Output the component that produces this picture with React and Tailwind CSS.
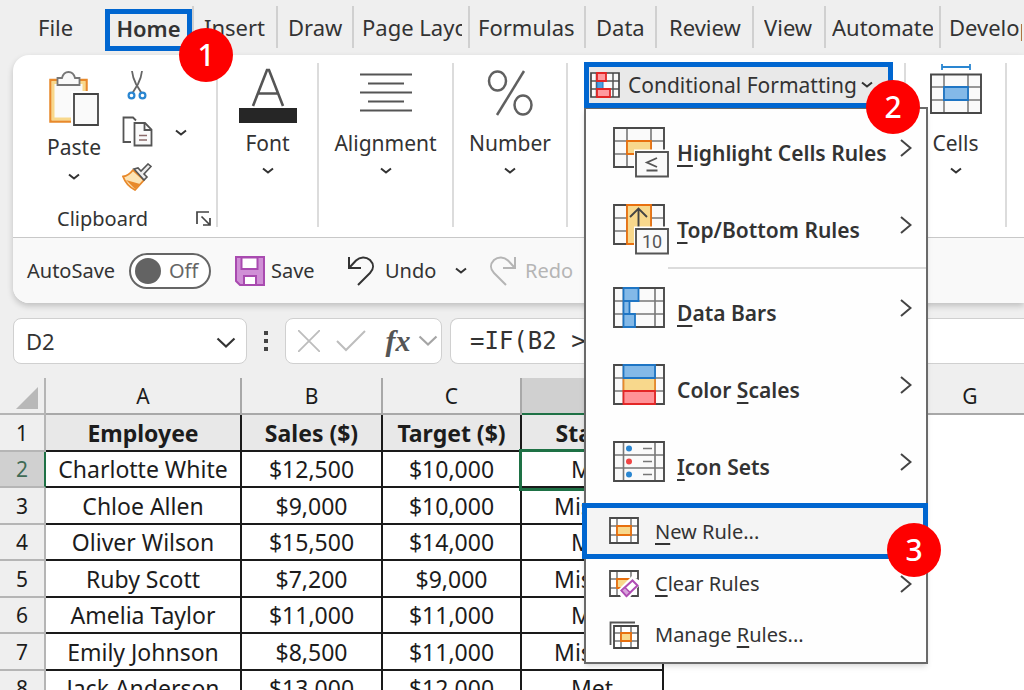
import { useState } from 'react';
import clsx from 'clsx';

const TABS = [
  { name: 'Insert', width: 'w-[84px]', pad: 'pl-2.5' },
  { name: 'Draw', width: 'w-[76px]', pad: 'pl-2.5' },
  { name: 'Page Layout', width: 'w-[116px]', pad: 'pl-2' },
  { name: 'Formulas', width: 'w-[116px]', pad: 'pl-2' },
  { name: 'Data', width: 'w-[71px]', pad: 'pl-2.5' },
  { name: 'Review', width: 'w-[97px]', pad: 'pl-3' },
  { name: 'View', width: 'w-[72px]', pad: 'pl-2.5' },
  { name: 'Automate', width: 'w-[115px]', pad: 'pl-1.5' },
  { name: 'Developer', width: 'w-[89px]', pad: 'pl-2' },
];

const COLUMNS = ['A', 'B', 'C', 'D', 'E', 'F', 'G'];

const ROWS = [
  ['Charlotte White', '$12,500', '$10,000', 'Met'],
  ['Chloe Allen', '$9,000', '$10,000', 'Missed'],
  ['Oliver Wilson', '$15,500', '$14,000', 'Met'],
  ['Ruby Scott', '$7,200', '$9,000', 'Missed'],
  ['Amelia Taylor', '$11,000', '$11,000', 'Met'],
  ['Emily Johnson', '$8,500', '$11,000', 'Missed'],
  ['Jack Anderson', '$13,000', '$12,000', 'Met'],
];

function SmallChevron({ className }) {
  return (
    <svg viewBox="0 0 12 8" className={clsx('w-3 h-2 shrink-0', className)} fill="none" stroke="currentColor" strokeWidth="2">
      <path d="M1 1.5L6 5.5L11 1.5" />
    </svg>
  );
}

function WideChevron({ className }) {
  return (
    <svg viewBox="0 0 20 12" className={clsx('w-5 h-3 shrink-0', className)} fill="none" stroke="currentColor" strokeWidth="2.2">
      <path d="M1.5 1.5L10 9.5L18.5 1.5" />
    </svg>
  );
}

function RightChevron() {
  return (
    <svg viewBox="0 0 12 18" className="w-3 h-[18px] shrink-0" fill="none" stroke="#444" strokeWidth="2">
      <path d="M1 1L10.5 9L1 17" />
    </svg>
  );
}

function Badge({ children, className }) {
  return (
    <span className={clsx('absolute z-30 flex items-center justify-center size-[54px] rounded-full bg-[#fe0000] text-white text-[30px] leading-none font-medium', className)}>
      {children}
    </span>
  );
}

/* Ribbon icons */

function PasteIcon() {
  return (
    <svg viewBox="0 0 50 56" className="w-[50px] h-14" fill="none">
      <path d="M37.5 20V9H1.500V50.500H24" stroke="#e8892b" strokeWidth="2.500" fill="#fafafa" />
      <path d="M35 20V11.500H4V48H24" stroke="#f8d88c" strokeWidth="3" />
      <path d="M8.500 14V7H13C14 3 16 1 19.500 1C23 1 25 3 26 7H30.500V14Z" fill="#fafafa" stroke="#777" strokeWidth="1.800" />
      <path d="M22 20H50V56H22Z" fill="#fff" />
      <path d="M25 23H49V54H25Z" fill="#fafafa" stroke="#444" strokeWidth="1.800" />
    </svg>
  );
}

function CutIcon() {
  return (
    <svg viewBox="0 0 20 30" className="w-5 h-[30px]" fill="none">
      <path d="M5 1C5.500 6 7 10 9 14L14.500 23M15 1C14.500 6 13 10 11 14L5.500 23" stroke="#666" strokeWidth="1.800" />
      <circle cx="4.500" cy="25.500" r="2.900" stroke="#2a86d1" strokeWidth="2.200" />
      <circle cx="15.500" cy="25.500" r="2.900" stroke="#2a86d1" strokeWidth="2.200" />
    </svg>
  );
}

function CopyIcon() {
  return (
    <svg viewBox="0 0 31 31" className="size-[31px]" fill="none" stroke="#555" strokeWidth="1.800">
      <path d="M9 26H1.500V1.500H11L14 4.500" />
      <path d="M12.500 7H23L29.500 13.500V29.500H12.500Z" fill="#fafafa" />
      <path d="M22.500 7V14H29.500" />
      <path d="M17 19.500H25M17 24H25" stroke="#8b6b6b" strokeWidth="1.400" />
    </svg>
  );
}

function BrushIcon() {
  return (
    <svg viewBox="0 0 30 28" className="w-[30px] h-7" fill="none">
      <path d="M11 7C8 11 5 13 1 13.500C3 19 7 24 13 27L22 17Z" fill="#fce3b4" stroke="#e8892b" strokeWidth="1.800" />
      <path d="M4 17L18 21L13 26Z" fill="#e8892b" />
      <path d="M12 6L16 5L19 8L26 1L29 3.500L22 11L25 14L22 17Z" fill="#eee" stroke="#555" strokeWidth="1.600" />
    </svg>
  );
}

function LauncherIcon() {
  return (
    <svg viewBox="0 0 16 16" className="size-4" fill="none" stroke="#444" strokeWidth="1.700">
      <path d="M1 13V1H13" />
      <path d="M5.500 5.500L13.500 13.500M14 7V14H7" />
    </svg>
  );
}

function FontIcon() {
  return (
    <svg viewBox="0 0 60 56" className="w-[60px] h-14" fill="none">
      <path d="M15 39L29 3H31L45 39M20.500 26.500H39.500" stroke="#555" strokeWidth="2.600" />
      <rect x="1" y="41" width="58" height="15" fill="#262626" />
    </svg>
  );
}

function AlignIcon() {
  return (
    <svg viewBox="0 0 52 56" className="w-[52px] h-14" stroke="#555" strokeWidth="1.900">
      <path d="M0 7.500H52M8 16.500H44M0 25.500H52M8 34.500H44M0 43.500H52" />
    </svg>
  );
}

function PercentIcon() {
  return (
    <svg viewBox="0 0 46 56" className="w-[46px] h-14" fill="none" stroke="#606060" strokeWidth="2.500">
      <ellipse cx="10.500" cy="14" rx="8.500" ry="9.500" />
      <ellipse cx="36" cy="38" rx="8.500" ry="9.500" />
      <path d="M37 4L10 48" />
    </svg>
  );
}

function CellsIcon() {
  return (
    <svg viewBox="0 0 52 56" className="w-[52px] h-14 overflow-visible" fill="none">
      <path d="M12 -3V3M40 -3V3M12 0H40" stroke="#2a86d1" strokeWidth="1.800" />
      <path d="M1 7.500H51V46H1Z" fill="#fafafa" />
      <path d="M14 7.500V46M38 7.500V46M1 20H51M1 33H51" stroke="#777" strokeWidth="1.500" />
      <path d="M1 7.500H51V46H1Z" stroke="#484848" strokeWidth="1.900" />
      <path d="M14 20H38V33H14Z" fill="#83b9e8" stroke="#1e75c4" strokeWidth="1.800" />
    </svg>
  );
}

function ConditionalIcon() {
  return (
    <svg viewBox="0 0 30 26" className="w-[30px] h-[26px] shrink-0" fill="none">
      <path d="M1 1H29V25H1Z" fill="#fafafa" />
      <path d="M6.500 1V25M23 1V25M1 9H29M1 17H29" stroke="#555" strokeWidth="1.500" />
      <path d="M1 1H29V25H1Z" stroke="#444" strokeWidth="1.700" />
      <path d="M7 9H13V17H7Z" fill="#4a9fe0" stroke="#2474bd" />
      <path d="M7 1H16V9H7ZM7 17H20V25H7Z" fill="#ff9a9f" stroke="#e32626" strokeWidth="1.800" />
    </svg>
  );
}

/* Menu icons */

function MenuGrid({ columns, children }) {
  return (
    <svg viewBox="0 0 52 42" className="w-[52px] h-[42px] shrink-0 overflow-visible" fill="none">
      <path d="M1 1H51V40H1Z" fill="#fafafa" />
      <path d={columns} stroke="#777" strokeWidth="1.600" />
      <path d="M1 14H51M1 27H51" stroke="#777" strokeWidth="1.600" />
      <path d="M1 1H51V40H1Z" stroke="#4a4a4a" strokeWidth="1.900" />
      {children}
    </svg>
  );
}

function HighlightIcon() {
  return (
    <MenuGrid columns="M14 1V40M38 1V40">
      <path d="M14 14H38V27H14Z" fill="#f8d88c" stroke="#e8700f" strokeWidth="1.800" />
      <path d="M21 22.500H56V52H21Z" fill="#fff" />
      <path d="M23 25H55V49.500H23Z" fill="#fafafa" stroke="#555" strokeWidth="1.900" />
      <path d="M44 31L34 35.500L44 40M33.500 43.500H44.500" stroke="#555" strokeWidth="1.900" />
    </MenuGrid>
  );
}

function TopBottomIcon() {
  return (
    <MenuGrid columns="M14 1V40M38 1V40">
      <path d="M14 1H38V40H14Z" fill="#f8d88c" stroke="#e8700f" strokeWidth="1.800" />
      <path d="M25.500 24V5M17 13L25.500 4.500L34 13" stroke="#444" strokeWidth="1.900" />
      <path d="M21 22.500H56V52H21Z" fill="#fff" />
      <path d="M23 25H55V49.500H23Z" fill="#fafafa" stroke="#555" strokeWidth="1.900" />
      <text x="39" y="44" textAnchor="middle" fontSize="18" fill="#555" className="font-['Roboto',sans-serif]">10</text>
    </MenuGrid>
  );
}

function DataBarsIcon() {
  return (
    <MenuGrid columns="M10.500 1V40M42 1V40">
      <path d="M10.500 1H25.500V14H10.500ZM10.500 14H16.500V27H10.500ZM10.500 27H22V40H10.500Z" fill="#83b9e8" stroke="#1e75c4" strokeWidth="1.800" />
    </MenuGrid>
  );
}

function ColorScalesIcon() {
  return (
    <MenuGrid columns="M10.500 1V40M42 1V40">
      <path d="M10.500 14H42V27H10.500Z" fill="#f8d88c" stroke="#e8892b" strokeWidth="1.800" />
      <path d="M10.500 1H42V14H10.500Z" fill="#83b9e8" stroke="#1e75c4" strokeWidth="1.800" />
      <path d="M10.500 27H42V40H10.500Z" fill="#ff9297" stroke="#e32626" strokeWidth="1.800" />
    </MenuGrid>
  );
}

function IconSetsIcon() {
  return (
    <MenuGrid columns="M10.500 1V40M42 1V40">
      <circle cx="16" cy="7.500" r="3" fill="#2a86d1" />
      <circle cx="16" cy="20.500" r="3" fill="#f04444" />
      <circle cx="16" cy="33.500" r="3" fill="#2a86d1" />
      <path d="M30 7.500H39M30 20.500H39M30 33.500H39" stroke="#777" strokeWidth="1.600" />
    </MenuGrid>
  );
}

function RuleGrid({ children }) {
  return (
    <svg viewBox="0 0 30 28" className="w-[30px] h-7 shrink-0 overflow-visible" fill="none">
      <path d="M1 1H29V26H1Z" fill="#fff" />
      <path d="M8 1V26M22 1V26M1 9H29M1 18H29" stroke="#777" strokeWidth="1.500" />
      <path d="M1 1H29V26H1Z" stroke="#4a4a4a" strokeWidth="1.800" />
      <path d="M8 9H22V18H8Z" fill="#f8d88c" stroke="#e8700f" strokeWidth="1.800" />
      {children}
    </svg>
  );
}

function ClearIcon() {
  return (
    <RuleGrid>
      <path d="M9 20L23 6L33 12L19 30H13Z" fill="#fff" />
      <path d="M12.500 20.500L23.500 10.500L28.500 15.500L17.500 26Z" fill="#fff" stroke="#b04db5" strokeWidth="2" />
      <path d="M12.500 20.500L16 17.500L21 22.500L17.500 26Z" fill="#d9a3dc" stroke="#b04db5" strokeWidth="1.600" />
    </RuleGrid>
  );
}

function ManageIcon() {
  return (
    <svg viewBox="0 0 30 28" className="w-[30px] h-7 shrink-0" fill="none">
      <path d="M1.500 24V1.500H26" stroke="#555" strokeWidth="1.800" />
      <path d="M5 5H29V27H5Z" fill="#fff" />
      <path d="M12 5V27M22 5V27M5 12H29M5 20H29" stroke="#777" strokeWidth="1.500" />
      <path d="M5 5H29V27H5Z" stroke="#444" strokeWidth="1.800" />
      <path d="M12 12H22V20H12Z" fill="#f8d88c" stroke="#e8700f" strokeWidth="1.800" />
    </svg>
  );
}

/* Quick access icons */

function SaveIcon() {
  return (
    <svg viewBox="0 0 30 30" className="size-[30px] shrink-0" fill="none" stroke="#a94bb0" strokeWidth="2">
      <path d="M1 1H29V29H5L1 25Z" fill="#d08fd6" />
      <path d="M6.500 1.500H22.500V13H6.500Z" fill="#fff" />
      <path d="M9 29V20H21V29Z" fill="#fff" />
    </svg>
  );
}

function UndoIcon({ className }) {
  return (
    <svg viewBox="0 0 28 30" className={clsx('w-7 h-[30px] shrink-0', className)} fill="none" stroke="currentColor" strokeWidth="2">
      <path d="M2 1V12H14" />
      <path d="M2 12L9 4.500C13 0.500 19 0.500 23 4C27 8 27 13 23 17L11 29" />
    </svg>
  );
}

function RibbonGroup({ label, icon, width }) {
  return (
    <div className={clsx('flex justify-center border-r-2 border-[#dcdcdc]', width)}>
      <button className="flex flex-col items-center pt-1 self-start">
        {icon}
        <span className="mt-1.5 text-[21px] leading-7">{label}</span>
        <SmallChevron className="mt-2.5" />
      </button>
    </div>
  );
}

function BigMenuItem({ icon, children }) {
  return (
    <button role="menuitem" className="flex items-center w-full h-[77px] pl-[27px] pr-3.5 pb-2 text-left">
      {icon}
      <span className="flex-1 ml-3 pt-2.5 text-[21px] leading-7 font-semibold whitespace-nowrap">{children}</span>
      <RightChevron />
    </button>
  );
}

function SmallMenuItem({ icon, children, arrow }) {
  return (
    <button role="menuitem" className="flex items-center w-full h-[51px] pl-[23px] pr-3.5 text-left">
      {icon}
      <span className="flex-1 ml-4 text-[20px] leading-7 whitespace-nowrap">{children}</span>
      {arrow && <RightChevron />}
    </button>
  );
}

function Key({ children }) {
  return <span className="underline decoration-2 underline-offset-4">{children}</span>;
}

function FormatMenu() {
  return (
    <div role="menu" className="absolute z-10 left-4 top-11 w-[344px] pt-1 pb-0.5 bg-[#fefefe] border-2 border-[#6a6a6a] shadow-md text-[#333]">
      <BigMenuItem icon={<HighlightIcon />}><Key>H</Key>ighlight Cells Rules</BigMenuItem>
      <BigMenuItem icon={<TopBottomIcon />}><Key>T</Key>op/Bottom Rules</BigMenuItem>
      <div className="h-0.5 ml-[82px] mb-1 bg-[#dcdcdc]" />
      <BigMenuItem icon={<DataBarsIcon />}><Key>D</Key>ata Bars</BigMenuItem>
      <BigMenuItem icon={<ColorScalesIcon />}>Color <Key>S</Key>cales</BigMenuItem>
      <BigMenuItem icon={<IconSetsIcon />}><Key>I</Key>con Sets</BigMenuItem>
      <div className="relative -ml-1 -mr-0.5 -my-px">
        <button role="menuitem" className="flex items-center w-full h-14 pl-[22px] border-5 border-[#0066d0] bg-[#f4f4f4] text-left">
          <RuleGrid />
          <span className="ml-4 pt-0.5 text-[20px] leading-7"><Key>N</Key>ew Rule...</span>
        </button>
        <Badge className="-right-[13px] top-5">3</Badge>
      </div>
      <SmallMenuItem icon={<ClearIcon />} arrow><Key>C</Key>lear Rules</SmallMenuItem>
      <SmallMenuItem icon={<ManageIcon />}>Manage <Key>R</Key>ules...</SmallMenuItem>
    </div>
  );
}

function TabBar() {
  return (
    <nav className="flex items-start h-[55px] pt-1.5 text-[22px] leading-8">
      <button className="w-[105px] h-[42px] shrink-0 pl-[38px] text-left">File</button>
      <div className="relative shrink-0 pt-[3px]">
        <button className="w-[87px] h-[42px] pb-1 border-5 border-[#0066d0] font-semibold leading-7">Home</button>
        <Badge className="-right-[41px] top-[22px]">1</Badge>
      </div>
      {TABS.map(tab => (
        <button key={tab.name} className={clsx('h-[42px] shrink-0 border-l-2 border-[#d0d0d0] pr-1.5 text-left', tab.width, tab.pad)}>
          <span className="block overflow-hidden whitespace-nowrap">{tab.name}</span>
        </button>
      ))}
    </nav>
  );
}

function Ribbon({ autoSave, onAutoSave }) {
  return (
    <section className="ml-[13px] rounded-l-2xl bg-white shadow-[0_3px_6px_rgba(0,0,0,0.2)]">
      <div className="flex h-[183px] pt-2 pb-2.5 border-b border-[#c8c8c8]">
        {/* Clipboard */}
        <div className="flex flex-col justify-between w-[205px] shrink-0 border-r-2 border-[#dcdcdc]">
          <div className="flex">
            <button className="flex flex-col items-center self-start w-[54px] ml-[34px] pt-2">
              <PasteIcon />
              <span className="mt-1.5 text-[21px] leading-7">Paste</span>
              <SmallChevron className="mt-3" />
            </button>
            <div className="flex flex-col items-center w-8 ml-5 pt-[7px]">
              <button aria-label="Cut"><CutIcon /></button>
              <button aria-label="Copy" className="mt-4"><CopyIcon /></button>
              <button aria-label="Format Painter" className="mt-4"><BrushIcon /></button>
            </div>
            <button aria-label="Copy options" className="self-center mt-3 ml-[22px]"><SmallChevron /></button>
          </div>
          <div className="flex items-center justify-between -mb-1.5 pl-11 pr-1">
            <span className="text-[20px] leading-7">Clipboard</span>
            <button aria-label="Clipboard settings"><LauncherIcon /></button>
          </div>
        </div>

        <RibbonGroup label="Font" icon={<FontIcon />} width="w-[101px] shrink-0" />
        <RibbonGroup label="Alignment" icon={<AlignIcon />} width="w-[135px] shrink-0" />
        <RibbonGroup label="Number" icon={<PercentIcon />} width="w-[114px] shrink-0" />

        <div className="relative w-[338px] shrink-0 border-r-2 border-[#dcdcdc]">
          <div className="relative z-20 -mt-px ml-4 w-[309px]">
            <button className="flex items-center w-full h-[46px] pl-px border-5 border-[#0066d0] bg-[#e9e9e9]">
              <ConditionalIcon />
              <span className="ml-2 text-[21px] leading-7 whitespace-nowrap">Conditional Formatting</span>
              <SmallChevron className="ml-1" />
            </button>
            <Badge className="-right-[27px] top-[18px]">2</Badge>
          </div>
          <FormatMenu />
        </div>

        <RibbonGroup label="Cells" icon={<CellsIcon />} width="w-[101px] shrink-0" />
      </div>

      {/* Quick access toolbar */}
      <div className="flex items-center h-[65px] pl-3.5 rounded-bl-2xl bg-[#f9f9f9] text-[20px] leading-7">
        <label className="flex items-center gap-3.5">
          <span className="w-[88px] whitespace-nowrap">AutoSave</span>
          <input type="checkbox" role="switch" className="sr-only" checked={autoSave} onChange={onAutoSave} />
          <span className={clsx('flex items-center w-[82px] h-9 px-1 gap-2 rounded-full border-2 border-[#666] bg-white', autoSave && 'flex-row-reverse')}>
            <span className="size-[26px] rounded-full bg-[#636363]" />
            <span className="text-[#666]">{autoSave ? 'On' : 'Off'}</span>
          </span>
        </label>
        <button className="flex items-center gap-1.5 w-20 ml-6 whitespace-nowrap"><SaveIcon />Save</button>
        <button className="flex items-center gap-2.5 w-[90px] ml-8 whitespace-nowrap"><UndoIcon />Undo</button>
        <button aria-label="Undo history" className="ml-[18px]"><SmallChevron /></button>
        <button className="flex items-center gap-2 ml-[22px] text-[#b5b5b5]"><UndoIcon className="-scale-x-100" />Redo</button>
      </div>
    </section>
  );
}

function FormulaBar() {
  return (
    <div className="flex items-center mt-[15px] pl-[13px] h-[46px]">
      <div className="flex items-center w-[234px] h-full shrink-0 pl-3 pr-2.5 rounded-lg border border-[#d0d0d0] bg-white">
        <input aria-label="Name box" defaultValue="D2" className="flex-1 min-w-0 text-[22px] outline-none" />
        <button aria-label="Cell names"><WideChevron className="mt-1" /></button>
      </div>
      <div className="flex flex-col items-center gap-1 w-[38px] shrink-0">
        <span className="size-1 bg-[#444]" />
        <span className="size-1 bg-[#444]" />
        <span className="size-1 bg-[#444]" />
      </div>
      <div className="flex items-center w-[157px] h-full shrink-0 pl-3 rounded-lg border border-[#d0d0d0] bg-white text-[#bdbdbd]">
        <button aria-label="Cancel">
          <svg viewBox="0 0 22 22" className="size-[22px]" stroke="currentColor" strokeWidth="1.800">
            <path d="M0 0L22 22M22 0L0 22" />
          </svg>
        </button>
        <button aria-label="Enter" className="ml-4">
          <svg viewBox="0 0 30 22" className="w-[30px] h-[22px]" fill="none" stroke="currentColor" strokeWidth="2">
            <path d="M1 11L10 20L29 1" />
          </svg>
        </button>
        <button className="w-7 ml-[18px] font-['Liberation_Serif',serif] italic font-bold text-[30px] leading-9 text-[#555]">fx</button>
        <button aria-label="Functions" className="ml-1.5"><WideChevron className="text-[#a5a5a5]" /></button>
      </div>
      <input
        aria-label="Formula"
        defaultValue={'=IF(B2 >= C2,"Met","Missed")'}
        className="flex-1 min-w-0 h-full ml-2 pl-[19px] rounded-l-lg border border-r-0 border-[#d0d0d0] bg-white font-['DejaVu_Sans_Mono',monospace] text-[24px] outline-none"
      />
    </div>
  );
}

function Sheet() {
  return (
    <table className="mt-3.5 w-[1034px] table-fixed border-separate border-spacing-0 bg-white text-center text-[23px] leading-[30px] text-[#1c1c1c]">
      <colgroup>
        <col className="w-[46px]" />
        <col className="w-[196px]" />
        <col className="w-[141px]" />
        <col className="w-[139px]" />
        <col className="w-[142px]" />
        <col className="w-[121px]" />
        <col className="w-[121px]" />
        <col className="w-[128px]" />
      </colgroup>
      <thead>
        <tr className="h-[37px] bg-[#efefef]">
          <td className="p-0 border-r-2 border-b-2 border-[#b5b5b5]">
            <svg viewBox="0 0 22 22" className="size-[22px] ml-4 mt-1">
              <path d="M22 0V22H0Z" fill="#b8b8b8" />
            </svg>
          </td>
          {COLUMNS.map(col => (
            <th
              key={col}
              scope="col"
              className={clsx(
                'p-0 border-b-2 font-normal text-[21px]',
                col === 'D' ? 'border-[#1e7145] bg-[#d0d0d0]' : 'border-[#a8a8a8]',
                'ABC'.includes(col) && 'border-r-2'
              )}
            >
              {col}
            </th>
          ))}
        </tr>
      </thead>
      <tbody>
        <tr className="h-[37px]">
          <th scope="row" className="p-0 border-r-2 border-b-2 border-[#b5b5b5] bg-[#efefef] font-normal text-[21px]">1</th>
          {['Employee', 'Sales ($)', 'Target ($)', 'Status'].map(title => (
            <th key={title} className="p-0 border-r-2 border-b-2 border-[#1a1a1a] bg-[#e8e8e8] font-bold">{title}</th>
          ))}
        </tr>
        {ROWS.map((row, i) => (
          <tr key={row[0]} className="h-[37px] even:h-9">
            <th
              scope="row"
              className={clsx(
                'p-0 border-r-2 border-b-2 font-normal text-[21px]',
                i === 0 ? 'border-b-[#b5b5b5] border-r-[#1e7145] bg-[#d0d0d0] text-[#3f6b56]' : 'border-[#b5b5b5] bg-[#efefef]'
              )}
            >
              {i + 2}
            </th>
            {row.map((cell, j) => (
              <td
                key={j}
                className={clsx(
                  'p-0 border-r-2 border-b-2 border-[#1a1a1a] whitespace-nowrap',
                  i === 0 && j === 3 && 'outline-3 outline-[#1e7145]'
                )}
              >
                {cell}
              </td>
            ))}
          </tr>
        ))}
      </tbody>
    </table>
  );
}

export default function App() {
  const [autoSave, setAutoSave] = useState(false);

  return (
    <div className="h-screen overflow-hidden bg-[#efefef] font-['Noto_Sans','Open_Sans',sans-serif] text-[#333]">
      <TabBar />
      <Ribbon autoSave={autoSave} onAutoSave={() => setAutoSave(!autoSave)} />
      <FormulaBar />
      <Sheet />
    </div>
  );
}
